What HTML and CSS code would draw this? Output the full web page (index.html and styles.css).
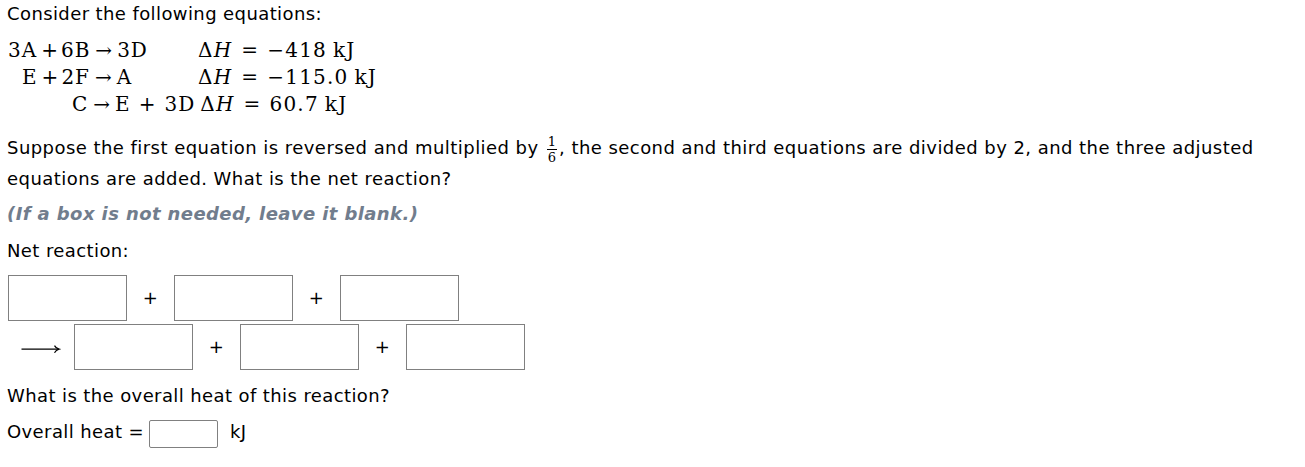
FILE: index.html
```html
<!DOCTYPE html>
<html>
<head>
<meta charset="utf-8">
<link rel="stylesheet" href="styles.css">
</head>
<body>
<div class="q">
  <p class="intro">Consider the following equations:</p>
  <div class="eqs">
    <div class="eq eq1"><span class="rx">3A<span class="bin">+</span>6B<span class="rel">→</span>3D</span><span class="dh">Δ<i>H</i><span class="rel2">=</span>−418<span class="sp"></span>kJ</span></div>
    <div class="eq eq2"><span class="rx">E<span class="bin">+</span>2F<span class="rel">→</span>A</span><span class="dh">Δ<i>H</i><span class="rel2">=</span>−115.0<span class="sp"></span>kJ</span></div>
    <div class="eq eq3"><span class="rx">C<span class="rel">→</span>E<span class="bin2">+</span>3D</span><span class="dh">Δ<i>H</i><span class="rel2">=</span>60.7<span class="sp"></span>kJ</span></div>
  </div>
  <p class="para">Suppose the first equation is reversed and multiplied by <span class="frac"><span class="num">1</span><span class="den">6</span></span>, the second and third equations are divided by 2, and the three adjusted equations are added. What is the net reaction?</p>
  <p class="hint">(If a box is not needed, leave it blank.)</p>
  <p class="label">Net reaction:</p>
  <div class="rxn">
    <div class="row">
      <span class="box"></span><span class="op">+</span><span class="box"></span><span class="op">+</span><span class="box"></span>
    </div>
    <div class="row">
      <span class="arrow"><svg width="40" height="12" viewBox="0 0 40 12"><path d="M0.5 6.2 H37.5" stroke="#000" stroke-width="1.3" fill="none"/><path d="M33.5 2.6 Q35 5.4 38 6.2 Q35 7 33.5 9.8" stroke="#000" stroke-width="1.2" fill="none"/></svg></span><span class="box"></span><span class="op">+</span><span class="box"></span><span class="op">+</span><span class="box"></span>
    </div>
  </div>
  <p class="label q2">What is the overall heat of this reaction?</p>
  <div class="heat"><span class="htxt">Overall heat =</span><span class="hbox"></span><span class="htxt unit">kJ</span></div>
</div>
</body>
</html>
```
FILE: styles.css
```css
body {
  margin: 0;
  background: #fff;
  color: #000;
  font-family: "DejaVu Sans", Verdana, sans-serif;
  font-size: 18px;
  letter-spacing: 0.4px;
}
.q {
  padding: 0 7px;
}
p { margin: 0; }
.intro {
  padding-top: 2px;
  line-height: 24px;
}
.eqs {
  margin-top: 11px;
  font-family: "DejaVu Serif", serif;
  font-size: 20px;
  letter-spacing: 1px;
}
.eq {
  display: flex;
  height: 27px;
  line-height: 27px;
  white-space: nowrap;
}
.eq1 .rx { width: 190px; padding-left: 1px; }
.eq2 .rx { width: 176px; padding-left: 15px; }
.eq3 .rx { padding-left: 65px; margin-right: 5px; }
.bin { margin: 0 2px 0 4px; }
.bin2 { margin: 0 8px; }
.rel { margin: 0 4px 0 5px; }
.rel2 { margin: 0 8px 0 9px; }
.sp { display: inline-block; width: 6px; }
.dh { letter-spacing: 1.2px; }
.dh i { font-style: italic; }
.para {
  margin-top: 15px;
  line-height: 30px;
  width: 1285px;
  letter-spacing: 0.45px;
}
.frac {
  display: inline-flex;
  flex-direction: column;
  vertical-align: 8px;
  font-family: "DejaVu Serif", serif;
  font-size: 13px;
  letter-spacing: 0;
  margin: 0 2px 0 2px;
  text-align: center;
}
.frac .num {
  line-height: 13px;
  padding: 0 1px 1px;
  border-bottom: 1px solid #000;
}
.frac .den {
  line-height: 13px;
  padding-top: 1px;
}
.hint {
  margin-top: 8px;
  line-height: 24px;
  font-weight: bold;
  font-style: italic;
  color: #717d8d;
}
.label {
  margin-top: 13px;
  line-height: 24px;
}
.rxn {
  margin: 12px 0 0 1px;
  display: flex;
  flex-direction: column;
  gap: 3px;
}
.row {
  display: flex;
  align-items: center;
}
.box {
  display: block;
  width: 117px;
  height: 44px;
  border: 1px solid #808080;
  background: #fff;
}
.op {
  width: 47px;
  text-align: center;
  line-height: 20px;
}
.arrow {
  display: block;
  width: 53px;
  height: 12px;
  padding: 3px 0 0 13px;
}
.arrow svg { display: block; }
.q2 { margin-top: 14px; }
.heat {
  margin-top: 12px;
  display: flex;
  align-items: flex-start;
}
.htxt { line-height: 24px; }
.hbox {
  display: block;
  width: 67px;
  height: 26px;
  border: 1px solid #808080;
  border-radius: 2px;
  margin: 0 12px 0 5px;
}
```
